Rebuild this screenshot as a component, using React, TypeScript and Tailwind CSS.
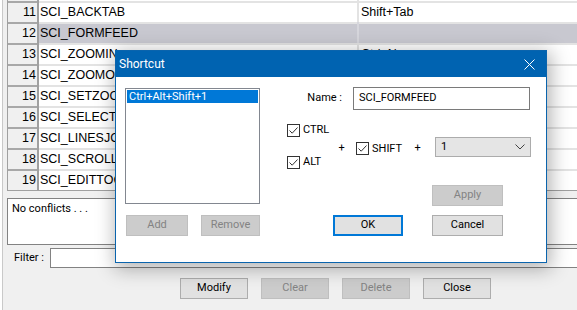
import React from "react";

const rows: { n: number; name: string; sc: string; sel?: boolean }[] = [
  { n: 11, name: "SCI_BACKTAB", sc: "Shift+Tab" },
  { n: 12, name: "SCI_FORMFEED", sc: "", sel: true },
  { n: 13, name: "SCI_ZOOMIN", sc: "Ctrl+Num +" },
  { n: 14, name: "SCI_ZOOMOUT", sc: "" },
  { n: 15, name: "SCI_SETZOOM", sc: "" },
  { n: 16, name: "SCI_SELECTALL", sc: "" },
  { n: 17, name: "SCI_LINESJOIN", sc: "" },
  { n: 18, name: "SCI_SCROLLCARET", sc: "" },
  { n: 19, name: "SCI_EDITTOGGLEOVERTYPE", sc: "" },
];

function Check() {
  return (
    <span className="w-[13px] h-[13px] border border-[#333333] bg-white flex items-center justify-center shrink-0">
      <svg width="11" height="11" viewBox="0 0 11 11">
        <path d="M1.5 5.5 L4.2 8.2 L9.5 2.5" fill="none" stroke="#333333" strokeWidth="1" />
      </svg>
    </span>
  );
}

function Btn({ w, label, disabled, def }: { w: string; label: string; disabled?: boolean; def?: boolean }) {
  const base = "h-[21px] flex items-center justify-center shrink-0 ";
  const cls = disabled
    ? "bg-[#cccccc] border border-[#bfbfbf] text-[#838383]"
    : def
    ? "bg-[#e1e1e1] border-2 border-[#0078d7] text-black"
    : "bg-[#e1e1e1] border border-[#adadad] text-black";
  return <div className={base + w + " " + cls}>{label}</div>;
}

export default function App() {
  return (
    <div className="relative w-[577px] h-[310px] overflow-hidden bg-[#f0f0f0] flex font-['Roboto',sans-serif] text-[11px] text-black">
      <div className="w-[2px] bg-white shrink-0" />
      <div className="w-px bg-[#c9c9c9] shrink-0" />
      <div className="pl-[4px] flex flex-col w-[600px] shrink-0">
        {/* grid */}
        <div className="flex flex-col border-l border-b border-[#a0a0a0] font-['Liberation_Sans',Arial,sans-serif] text-[12.5px]">
          <div className="flex h-[1px]">
            <div className="w-[29px] bg-[#f0f0f0]" />
            <div className="w-[2px] bg-[#a0a0a0]" />
            <div className="w-[318px] bg-white" />
            <div className="w-[2px] bg-[#e3e3e3]" />
            <div className="flex-1 bg-white" />
          </div>
          {rows.map((r) => (
            <div key={r.n} className="flex h-[21px]">
              <div className="w-[29px] bg-[#f0f0f0] border-t-2 border-[#a8a8a8] flex items-center justify-end pr-[1px]">
                {r.n}
              </div>
              <div className="w-[2px] bg-[#a0a0a0]" />
              <div
                className={
                  "w-[318px] border-t-2 border-[#e3e3e3] flex items-center pl-[1px] whitespace-nowrap overflow-hidden " +
                  (r.sel ? "bg-[#c8c8d0]" : "bg-white")
                }
              >
                {r.name}
              </div>
              <div className={"w-[2px] " + (r.sel ? "bg-[#d6d6dc]" : "bg-[#e3e3e3]")} />
              <div
                className={
                  "flex-1 border-t-2 border-[#e3e3e3] flex items-center pl-[2px] whitespace-nowrap " +
                  (r.sel ? "bg-[#c8c8d0]" : "bg-white")
                }
              >
                {r.sc}
              </div>
            </div>
          ))}
        </div>

        {/* conflicts */}
        <div className="mt-[7px] h-[47px] border border-[#828282] bg-white pl-[4px] pt-[3px] leading-[13px]">
          No conflicts . . .
        </div>

        {/* filter */}
        <div className="mt-[3px] flex items-center h-[20px]">
          <span className="ml-[7px] w-[36px] shrink-0">Filter :</span>
          <div className="flex-1 h-[20px] border border-[#828282] bg-white" />
        </div>

        {/* buttons */}
        <div className="mt-[10px] flex pl-[173px] gap-[13px]">
          <Btn w="w-[68px]" label="Modify" />
          <Btn w="w-[68px]" label="Clear" disabled />
          <Btn w="w-[68px]" label="Delete" disabled />
          <Btn w="w-[68px]" label="Close" />
        </div>
      </div>

      {/* dialog */}
      <div className="absolute left-[115px] top-[50px] w-[432px] h-[213px] border border-[#0a64ad] bg-white flex flex-col shadow-[2px_4px_18px_2px_rgba(0,0,0,0.3)]">
        <div className="h-[26px] shrink-0 bg-[#0063b1] flex items-center justify-between pl-[3px] pr-[11px] text-white text-[12px]">
          <span>Shortcut</span>
          <svg width="11" height="11" viewBox="0 0 11 11">
            <path d="M0.5 0.5 L10.5 10.5 M10.5 0.5 L0.5 10.5" stroke="white" strokeWidth="1" fill="none" />
          </svg>
        </div>
        <div className="flex flex-col">
          <div className="flex items-start">
            <div className="ml-[9px] mt-[11px] w-[135px] h-[116px] border border-[#828790] p-px shrink-0">
              <div className="h-[13px] bg-[#0078d7] text-white pl-[2px] leading-[13px] whitespace-nowrap">
                Ctrl+Alt+Shift+1
              </div>
            </div>
            <div className="ml-[27px] mt-[10px] w-[243px] flex flex-col shrink-0">
              <div className="flex items-center h-[23px]">
                <span className="w-[55px] text-right shrink-0">Name :</span>
                <div className="ml-[11px] w-[177px] h-[23px] border border-[#7a7a7a] flex items-center pl-[5px]">
                  SCI_FORMFEED
                </div>
              </div>
              <div className="mt-[14px] flex flex-col">
                <div className="flex items-center h-[13px]">
                  <Check />
                  <span className="ml-[3px]">CTRL</span>
                </div>
                <div className="flex items-start h-[19px]">
                  <span className="w-[51px] shrink-0" />
                  <span className="w-[7px] text-center shrink-0 mt-[4px] leading-[13px]">+</span>
                  <span className="w-[11px] shrink-0" />
                  <div className="mt-[5px]">
                    <Check />
                  </div>
                  <span className="ml-[3px] w-[42px] shrink-0 mt-[5px] leading-[13px]">SHIFT</span>
                  <span className="w-[7px] text-center shrink-0 mt-[4px] leading-[13px]">+</span>
                  <span className="w-[14px] shrink-0" />
                  <div className="w-[96px] h-[20px] bg-[#e5e5e5] border border-[#acacac] flex items-center justify-between pl-[5px] pr-[5px] shrink-0">
                    <span>1</span>
                    <svg width="10" height="6" viewBox="0 0 10 6">
                      <path d="M0.5 0.5 L5 5 L9.5 0.5" fill="none" stroke="#444444" strokeWidth="1" />
                    </svg>
                  </div>
                </div>
                <div className="flex items-center h-[13px]">
                  <Check />
                  <span className="ml-[3px]">ALT</span>
                </div>
              </div>
              <div className="mt-[16px] ml-[145px]">
                <Btn w="w-[71px]" label="Apply" disabled />
              </div>
            </div>
          </div>
          <div className="mt-[9px] flex">
            <div className="ml-[10px]">
              <Btn w="w-[62px]" label="Add" disabled />
            </div>
            <div className="ml-[13px]">
              <Btn w="w-[59px]" label="Remove" disabled />
            </div>
            <div className="ml-[73px]">
              <Btn w="w-[70px]" label="OK" def />
            </div>
            <div className="ml-[29px]">
              <Btn w="w-[71px]" label="Cancel" />
            </div>
          </div>
        </div>
      </div>
    </div>
  );
}
